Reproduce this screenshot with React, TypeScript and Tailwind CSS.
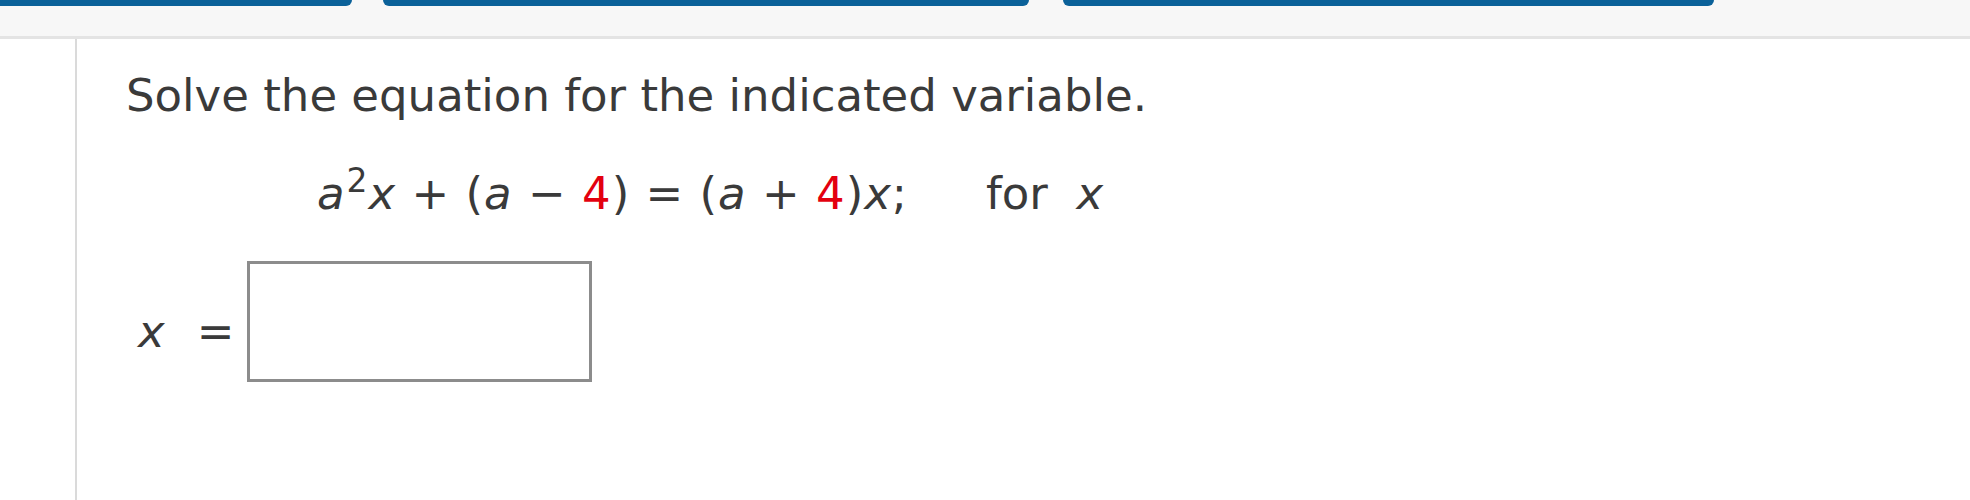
import React from "react";

export default function App() {
  const mathFont = { fontFamily: '"DejaVu Sans", Verdana, sans-serif' };
  return (
    <div
      className="w-full h-[500px] bg-white text-[#3a3a3a] overflow-hidden"
      style={mathFont}
    >
      <div className="h-[39px] bg-[#f7f7f7] border-b-[3px] border-[#e4e4e4] flex items-start">
        <div className="h-[6px] w-[372px] -ml-[20px] bg-[#0b6199] rounded-b-[12px]" />
        <div className="h-[6px] w-[646px] ml-[31px] bg-[#0b6199] rounded-b-[12px]" />
        <div className="h-[6px] w-[651px] ml-[34px] bg-[#0b6199] rounded-b-[12px]" />
      </div>
      <div className="flex h-[461px]">
        <div className="w-[75px] shrink-0" />
        <div className="border-l-2 border-[#dadada] pl-[49px] pt-[31px] flex-1">
          <div className="text-[45px] leading-[52px] whitespace-pre">
            Solve the equation for the indicated variable.
          </div>
          <div className="mt-[46px] ml-[191px] text-[45px] leading-[52px] whitespace-pre flex">
            <span className="tracking-[1px]">
              <i>a</i>
              <sup className="text-[33px] relative -top-[17px] ml-[1px]">2</sup>
              <i>x</i>
              {" + ("}
              <i>a</i>
              {" − "}
              <span className="text-[#e3000f]">4</span>
              {") = ("}
              <i>a</i>
              {" + "}
              <span className="text-[#e3000f]">4</span>
              {")"}
              <i>x</i>
              {";"}
            </span>
            <span className="ml-[78px]">
              {"for  "}
              <i>x</i>
            </span>
          </div>
          <div className="mt-[41px] flex items-start">
            <div className="ml-[12px] mt-[45px] text-[45px] leading-[52px] flex">
              <i>x</i>
              <span className="ml-[32px]">=</span>
            </div>
            <div className="ml-[13px] w-[345px] h-[121px] border-[3px] border-[#8c8c8c] bg-white" />
          </div>
        </div>
      </div>
    </div>
  );
}
